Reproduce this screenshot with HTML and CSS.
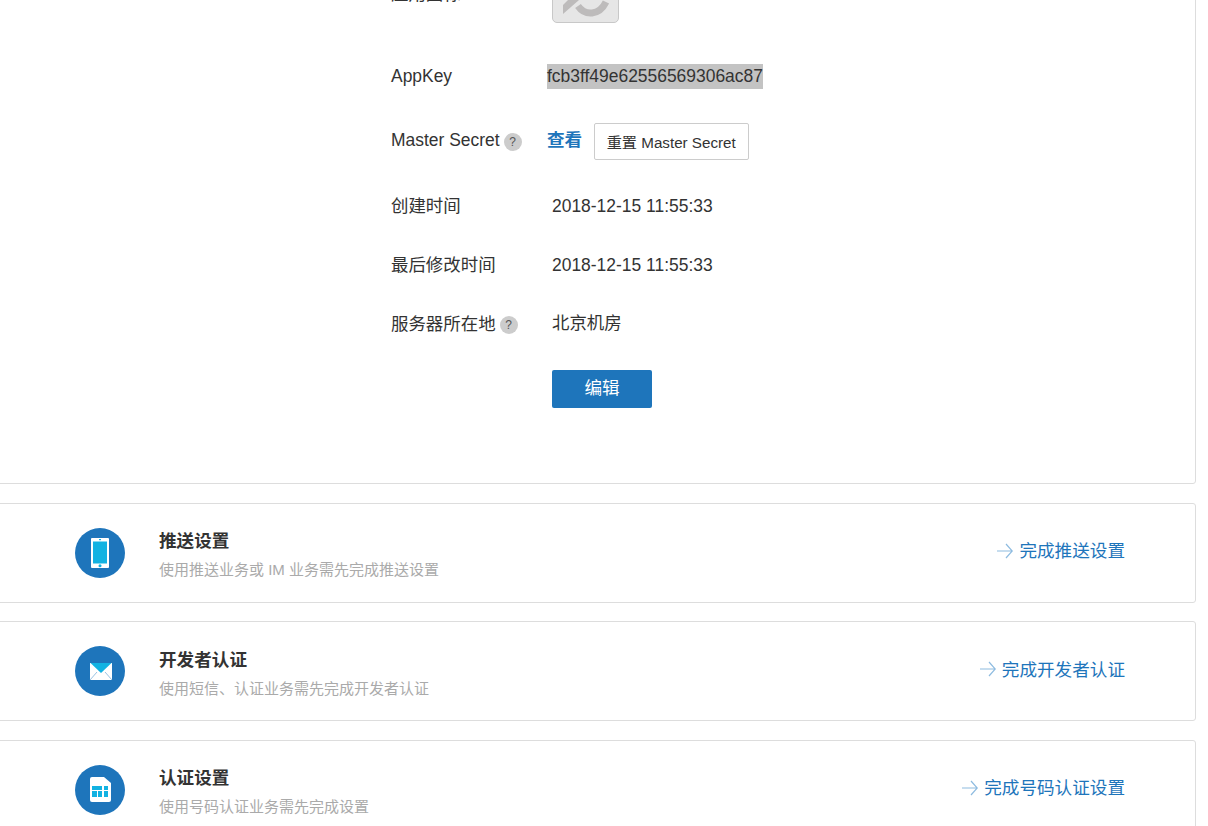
FILE: index.html
```html
<!DOCTYPE html>
<html lang="zh-CN">
<head>
<meta charset="utf-8">
<title>应用信息</title>
<link rel="stylesheet" href="styles.css">
</head>
<body>
<main class="page">
  <section class="card form">
    <div class="row row-icon">
      <div class="label label-icon">应用图标</div>
      <div class="app-icon">
        <svg viewBox="0 0 65 65" width="65" height="65"><path d="M25 49C32 59 46 59 53 45" fill="none" stroke="#bdbbbb" stroke-width="7"/><path d="M10 57L10 48L22 36L34 36Z" fill="#bdbbbb"/></svg>
      </div>
    </div>
    <div class="row">
      <div class="label">AppKey</div>
      <div class="value shift"><span class="selected">fcb3ff49e62556569306ac87</span></div>
    </div>
    <div class="row row-tall">
      <div class="label"><span class="lift-latin">Master Secret</span><span class="help">?</span></div>
      <div class="value shift actions"><a class="view">查看</a><button class="reset">重置 Master Secret</button></div>
    </div>
    <div class="row">
      <div class="label"><span class="lift-cjk">创建时间</span></div>
      <div class="value">2018-12-15 11:55:33</div>
    </div>
    <div class="row">
      <div class="label"><span class="lift-cjk">最后修改时间</span></div>
      <div class="value">2018-12-15 11:55:33</div>
    </div>
    <div class="row">
      <div class="label"><span class="lift-cjk">服务器所在地</span><span class="help">?</span></div>
      <div class="value lift-value">北京机房</div>
    </div>
    <button class="edit">编辑</button>
  </section>

  <section class="card item">
    <svg class="badge" viewBox="0 0 50 50"><circle cx="25" cy="25" r="25" fill="#1e75bb"/><rect x="16" y="10" width="18" height="30" rx="1" fill="#fff"/><rect x="18" y="13.500" width="14" height="22" fill="#12b2e2"/><circle cx="25" cy="37.800" r="1.500" fill="#12b2e2"/><rect x="24" y="11" width="2" height="1.200" fill="#12b2e2"/></svg>
    <div class="text"><h3>推送设置</h3><p>使用推送业务或 IM 业务需先完成推送设置</p></div>
    <a class="link"><svg class="arrow" viewBox="0 0 16 16"><path d="M0 8H15M9 1L15.300 8L9 15" fill="none" stroke="#8dbbe0" stroke-width="1.200"/></svg>完成推送设置</a>
  </section>

  <section class="card item">
    <svg class="badge" viewBox="0 0 50 50"><circle cx="25" cy="25" r="25" fill="#1e75bb"/><rect x="15" y="17" width="22" height="17" fill="#fff"/><path d="M15.500 17H36.500L26 27Z" fill="#12b2e2"/><path d="M15 34L22 26M37 34L30 26" stroke="#7fb3da" stroke-width=".8" fill="none"/></svg>
    <div class="text"><h3>开发者认证</h3><p>使用短信、认证业务需先完成开发者认证</p></div>
    <a class="link"><svg class="arrow" viewBox="0 0 16 16"><path d="M0 8H15M9 1L15.300 8L9 15" fill="none" stroke="#8dbbe0" stroke-width="1.200"/></svg>完成开发者认证</a>
  </section>

  <section class="card item">
    <svg class="badge" viewBox="0 0 50 50"><circle cx="25" cy="25" r="25" fill="#1e75bb"/><path d="M17 12H29L36 18V35A2 2 0 0 1 34 37H17A2 2 0 0 1 15 35V14A2 2 0 0 1 17 12Z" fill="#fff"/><path d="M17 21H27V25H17ZM17 26H22V32H17ZM23 26H27V32H23ZM29 21H33V25H29ZM29 26H33V32H29Z" fill="#12b2e2"/></svg>
    <div class="text"><h3>认证设置</h3><p>使用号码认证业务需先完成设置</p></div>
    <a class="link"><svg class="arrow" viewBox="0 0 16 16"><path d="M0 8H15M9 1L15.300 8L9 15" fill="none" stroke="#8dbbe0" stroke-width="1.200"/></svg>完成号码认证设置</a>
  </section>
</main>
</body>
</html>
```
FILE: styles.css
```css
html, body {
  margin: 0;
  height: 826px;
  overflow: hidden;
  background: #fff;
}
body {
  font-family: "Liberation Sans", "Noto Sans CJK SC", sans-serif;
  font-size: 17.450px;
  color: #333;
}
.page {
  width: 1296px;
  margin: -100px 0 0 -100px;
  display: flex;
  flex-direction: column;
  gap: 18.400px;
}
.card {
  box-sizing: border-box;
  border: 1px solid #ddd;
  border-radius: 3px;
  background: #fff;
}
.form {
  height: 584px;
  margin-bottom: 0.600px;
  padding: 55px 0 0 490px;
}
.row {
  display: flex;
  align-items: center;
  height: 59px;
}
.row-icon {
  height: 90.500px;
  align-items: flex-start;
}
.row-tall {
  height: 71px;
}
.label {
  width: 161px;
  flex: none;
  display: flex;
  align-items: center;
}
.label-icon {
  padding-top: 24px;
}
.lift-latin {
  padding-bottom: 2px;
}
.lift-cjk {
  padding-bottom: 4px;
}
.lift-value {
  padding-bottom: 6px;
}
.app-icon {
  width: 65px;
  height: 65px;
  border: 1px solid #c8c8c8;
  border-radius: 5px;
  background: #e6e6e6;
  overflow: hidden;
}
.app-icon svg {
  display: block;
}
.shift {
  margin-left: -5px;
}
.selected {
  display: inline-block;
  line-height: 25px;
  background: #c3c3c3;
}
.help {
  width: 18px;
  height: 18px;
  margin: 2px 0 0 4px;
  border-radius: 50%;
  background: #ccc;
  color: #555;
  font-size: 12px;
  line-height: 18px;
  text-align: center;
}
.actions {
  display: flex;
  align-items: center;
  gap: 11.500px;
}
.view {
  padding-bottom: 5px;
  color: #1e75bb;
  font-weight: 700;
  font-size: 17.600px;
}
.reset {
  box-sizing: border-box;
  width: 155px;
  height: 37px;
  padding: 0;
  border: 1px solid #ccc;
  border-radius: 2px;
  background: #fff;
  color: #333;
  font: inherit;
  font-size: 15.200px;
}
.edit {
  display: block;
  width: 100px;
  height: 38px;
  margin: 16px 0 0 161px;
  padding: 0 0 4px;
  border: 0;
  border-radius: 2px;
  background: #1e75bb;
  color: #fff;
  font: inherit;
  font-size: 17.600px;
}
.item {
  height: 100px;
  flex: none;
  display: flex;
  align-items: center;
  padding: 0 70px 0 174px;
}
.badge {
  width: 50px;
  height: 50px;
  flex: none;
}
.text {
  flex: 1;
  margin: 4px 0 0 34px;
}
.text h3 {
  margin: 0 0 5px;
  font-size: 17.600px;
  line-height: 26px;
  font-weight: 700;
  color: #333;
}
.text p {
  margin: 0;
  font-size: 15px;
  line-height: 22px;
  color: #aaa;
}
.link {
  display: flex;
  align-items: center;
  gap: 6px;
  color: #1e75bb;
  font-size: 17.600px;
  margin-top: -6px;
}
.arrow {
  width: 16px;
  height: 16px;
  margin-top: 2px;
}
```
